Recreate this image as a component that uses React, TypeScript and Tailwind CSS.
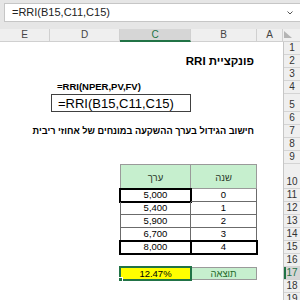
const F = "font-['Liberation_Sans','DejaVu_Sans',Arial,sans-serif]";

const rowHeights = [13, 13, 13, 13, 18, 13, 13, 13, 13, 25, 13, 13, 13, 13, 13, 13, 13, 13, 13];

const data = [
  { v: "5,000", y: "0", thickC: true, thickB: false },
  { v: "5,400", y: "1", thickC: false, thickB: false },
  { v: "5,900", y: "2", thickC: false, thickB: false },
  { v: "6,700", y: "3", thickC: false, thickB: false },
  { v: "8,000", y: "4", thickC: true, thickB: true },
];

export default function App() {
  return (
    <div className={`w-[300px] h-[300px] overflow-hidden bg-white ${F}`}>
      {/* formula bar */}
      <div className="h-[29px] bg-[#e6e6e6] pt-[3px]">
        <div className="ml-[4px] h-[19px] bg-white border border-[#c6c6c6] border-r-0 flex items-center pl-[7px] pr-[7px] text-[11px] text-[#222]">
          <span className="flex-1">=RRI(B15,C11,C15)</span>
          <svg width="6" height="4" viewBox="0 0 6 4" className="mt-[1px]">
            <path d="M0.5 0.5 L3 3 L5.5 0.5" fill="none" stroke="#555" strokeWidth="1" />
          </svg>
        </div>
      </div>
      {/* column headers */}
      <div className="flex h-[13px] bg-[#efefef] text-[10px] text-[#444] leading-none">
        <div className="w-[50px] border-r border-b border-[#d0d0d0] flex items-center justify-center">E</div>
        <div className="w-[70px] border-r border-b border-[#d0d0d0] flex items-center justify-center">D</div>
        <div className="w-[71px] border-r border-[#d0d0d0] border-b-2 border-b-[#217346] bg-[#d6d6d6] text-[#217346] flex items-center justify-center">C</div>
        <div className="w-[66px] border-r border-b border-[#d0d0d0] flex items-center justify-center">B</div>
        <div className="w-[26px] border-r border-b border-[#d0d0d0] flex items-center justify-center">A</div>
        <div className="w-[17px] border-b border-[#d0d0d0] flex items-end pl-[1px] pb-[3px]">
          <svg width="8" height="7" viewBox="0 0 8 7">
            <path d="M0 0 L0 7 L8 7 Z" fill="#b4b4b4" />
          </svg>
        </div>
      </div>
      <div className="flex">
        {/* sheet area */}
        <div className="w-[283px] text-black">
          <div className="h-[13px]" />
          <div className="h-[13px] flex items-center justify-end pr-[29px] text-[11.5px] font-bold">
            <span dir="rtl">פונקציית RRI</span>
          </div>
          <div className="h-[13px]" />
          <div className="h-[13px] flex items-center pl-[57px] text-[9.5px] font-bold">=RRI(NPER,PV,FV)</div>
          <div className="h-[18px]">
            <div className="ml-[51px] w-[140px] h-full border border-[#404040] flex items-center pl-[6px] text-[13px] leading-none">
              =RRI(B15,C11,C15)
            </div>
          </div>
          <div className="h-[13px]" />
          <div className="h-[13px] flex items-center justify-end pr-[29px] text-[9.2px] font-bold">
            <span dir="rtl">חישוב הגידול בערך ההשקעה במונחים של אחוזי ריבית</span>
          </div>
          <div className="h-[26px]" />
          {/* table */}
          <div className="ml-[120px] w-[137px] text-[9.5px] leading-none">
            <div className="flex h-[25px] bg-[#c6efce] text-[#2b3b2b]">
              <div className="w-[71px] border border-[#9a9a9a] flex items-center justify-center pt-[3px]" dir="rtl">ערך</div>
              <div className="w-[66px] border-t border-r border-b border-[#9a9a9a] flex items-center justify-center pt-[3px]" dir="rtl">שנה</div>
            </div>
            {data.map((d) => (
              <div key={d.y} className="flex h-[13px]">
                <div
                  className={`w-[71px] border-l border-r border-b border-[#6b6b6b] flex items-center justify-center ${d.thickC ? "outline-2 outline-black -outline-offset-1" : ""}`}
                >
                  {d.v}
                </div>
                <div
                  className={`w-[66px] border-r border-b border-[#6b6b6b] flex items-center justify-center ${d.thickB ? "outline-2 outline-black -outline-offset-1" : ""}`}
                >
                  {d.y}
                </div>
              </div>
            ))}
            <div className="h-[13px]" />
            <div className="flex h-[13px]">
              <div className="relative w-[71px] bg-[#ffff00] border border-[#9a9a9a] flex items-center justify-center outline-2 outline-[#217346] -outline-offset-1">
                12.47%
                <div className="absolute left-[-3px] bottom-[-3px] w-[5px] h-[5px] bg-[#217346] border border-white" />
              </div>
              <div className="w-[66px] bg-[#c6efce] border-t border-r border-b border-[#9a9a9a] flex items-center justify-center text-[#1f6b2a]" dir="rtl">
                תוצאה
              </div>
            </div>
          </div>
        </div>
        {/* row headers */}
        <div className="w-[17px] bg-[#efefef] border-l border-[#c6c6c6] text-[10px] text-[#333] leading-none">
          {rowHeights.map((h, i) => {
            const sel = i + 1 === 17;
            return (
              <div
                key={i}
                style={{ height: h }}
                className={`flex items-end justify-center pb-[1px] border-b border-[#d4d4d4] ${sel ? "bg-[#d6d6d6] text-[#217346] shadow-[inset_2px_0_0_#217346]" : ""}`}
              >
                {i + 1}
              </div>
            );
          })}
        </div>
      </div>
    </div>
  );
}
